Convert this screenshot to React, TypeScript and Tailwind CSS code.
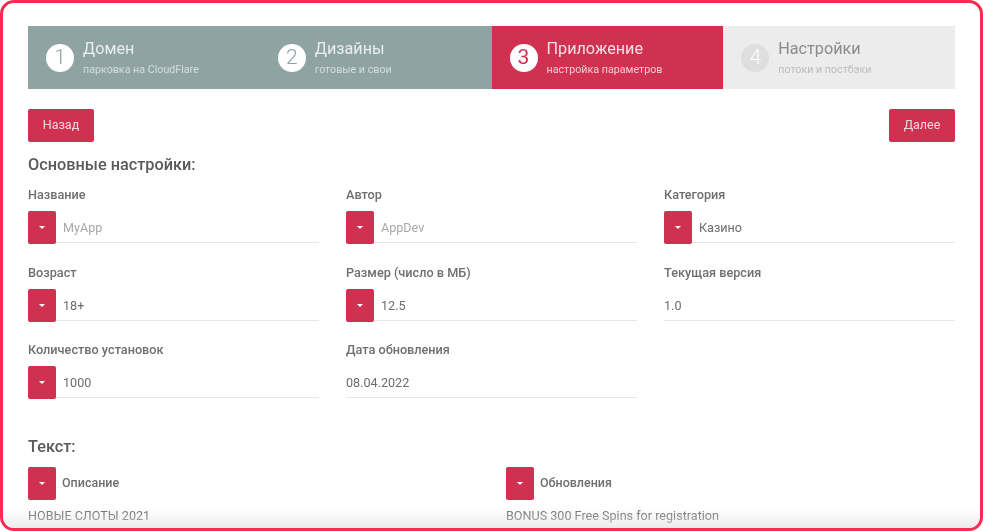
const font = { fontFamily: "Roboto, 'Liberation Sans', sans-serif" };

function Step({ n, title, sub, bg, circle, numC, titleC, subC, numW = "font-light" }: { n: string; title: string; sub: string; bg: string; circle: string; numC: string; titleC: string; subC: string; numW?: string }) {
  return (
    <div className={`flex h-[63px] items-center pl-[18px] ${bg}`}>
      <div className={`flex h-[28px] w-[28px] shrink-0 items-center justify-center rounded-full text-[21px] leading-none ${numW} ${circle} ${numC}`}>{n}</div>
      <div className="ml-[9px] flex flex-col pt-[1px]">
        <span className={`text-[16.2px] leading-[18px] ${titleC}`}>{title}</span>
        <span className={`mt-[6px] text-[10.7px] leading-[12px] ${subC}`}>{sub}</span>
      </div>
    </div>
  );
}

function Caret() {
  return (
    <div className="flex h-[33px] w-[28px] shrink-0 items-center justify-center rounded-[2px] bg-[#d03150]">
      <div className="h-0 w-0 border-x-[3px] border-t-[3px] border-x-transparent border-t-white" />
    </div>
  );
}

function Field({ label, value, muted, plain }: { label: string; value: string; muted?: boolean; plain?: boolean }) {
  return (
    <div className="flex h-[77.5px] flex-col">
      <div className="h-[16px] text-[12.7px] font-medium leading-[16px] text-[#6f6f6f]">{label}</div>
      <div className="relative mt-[8px] flex h-[33px] items-center">
        {!plain && <Caret />}
        <span className={`pt-[2px] text-[12.6px] leading-none ${plain ? "" : "ml-[7px]"} ${muted ? "text-[#a8a8a8]" : "text-[#6d6d6d]"}`}>{value}</span>
        <div className="absolute bottom-[1px] left-0 right-0 -z-10 h-px bg-[#e6e6e6]" />
      </div>
    </div>
  );
}

function RedButton({ children }: { children: string }) {
  return <button className="flex h-[33px] w-[66px] items-center justify-center rounded-[2px] bg-[#d03150] text-[12.5px] text-[#f6d8de]">{children}</button>;
}

function TextBlock({ title, value }: { title: string; value: string }) {
  return (
    <div>
      <div className="flex items-center">
        <Caret />
        <span className="ml-[6px] text-[12.5px] font-medium text-[#6f6f6f]">{title}</span>
      </div>
      <div className="mt-[9px] text-[12.6px] leading-[14px] text-[#696969]">{value}</div>
    </div>
  );
}

export default function App() {
  return (
    <div className="relative isolate h-[531px] w-[983px] overflow-hidden rounded-[14px] border-[3px] border-[#f62b54] bg-white" style={font}>
      <div className="h-full overflow-hidden px-[25px] pt-[23px] blur-[0.6px]">
        <div className="grid grid-cols-4">
          <Step n="1" title="Домен" sub="парковка на CloudFlare" bg="bg-[#8fa3a3]" circle="bg-white" numC="text-[#8fa3a3]" titleC="text-[#e9eeee]" subC="text-[#d5dddd]" />
          <Step n="2" title="Дизайны" sub="готовые и свои" bg="bg-[#8fa3a3]" circle="bg-white" numC="text-[#8fa3a3]" titleC="text-[#e9eeee]" subC="text-[#d5dddd]" />
          <Step n="3" title="Приложение" sub="настройка параметров" bg="bg-[#d03150]" circle="bg-white" numC="text-[#d03150]" titleC="text-[#f8dfe4]" subC="text-[#f3cdd5]" numW="font-normal" />
          <Step n="4" title="Настройки" sub="потоки и постбэки" bg="bg-[#ececec]" circle="bg-[#dedede]" numC="text-white" titleC="text-[#8a8a8a]" subC="text-[#bdbdbd]" />
        </div>
        <div className="mt-[20px] flex justify-between">
          <RedButton>Назад</RedButton>
          <RedButton>Далее</RedButton>
        </div>
        <h2 className="mt-[13px] text-[16.3px] font-medium leading-[20px] text-[#5a5a5a]">Основные настройки:</h2>
        <div className="mt-[12px] grid grid-cols-3 gap-x-[27px]">
          <Field label="Название" value="MyApp" muted />
          <Field label="Автор" value="AppDev" muted />
          <Field label="Категория" value="Казино" />
          <Field label="Возраст" value="18+" />
          <Field label="Размер (число в МБ)" value="12.5" />
          <Field label="Текущая версия" value="1.0" plain />
          <Field label="Количество установок" value="1000" />
          <Field label="Дата обновления" value="08.04.2022" plain />
        </div>
        <h2 className="mt-[17.5px] text-[16.3px] font-medium leading-[20px] text-[#5a5a5a]">Текст:</h2>
        <div className="mt-[10px] grid grid-cols-[478px_1fr]">
          <TextBlock title="Описание" value="НОВЫЕ СЛОТЫ 2021" />
          <TextBlock title="Обновления" value="BONUS 300 Free Spins for registration" />
        </div>
      </div>
      <div className="pointer-events-none absolute inset-x-0 bottom-0 h-[20px] bg-gradient-to-b from-white/0 to-[#e4e4e4]/70" />
    </div>
  );
}
